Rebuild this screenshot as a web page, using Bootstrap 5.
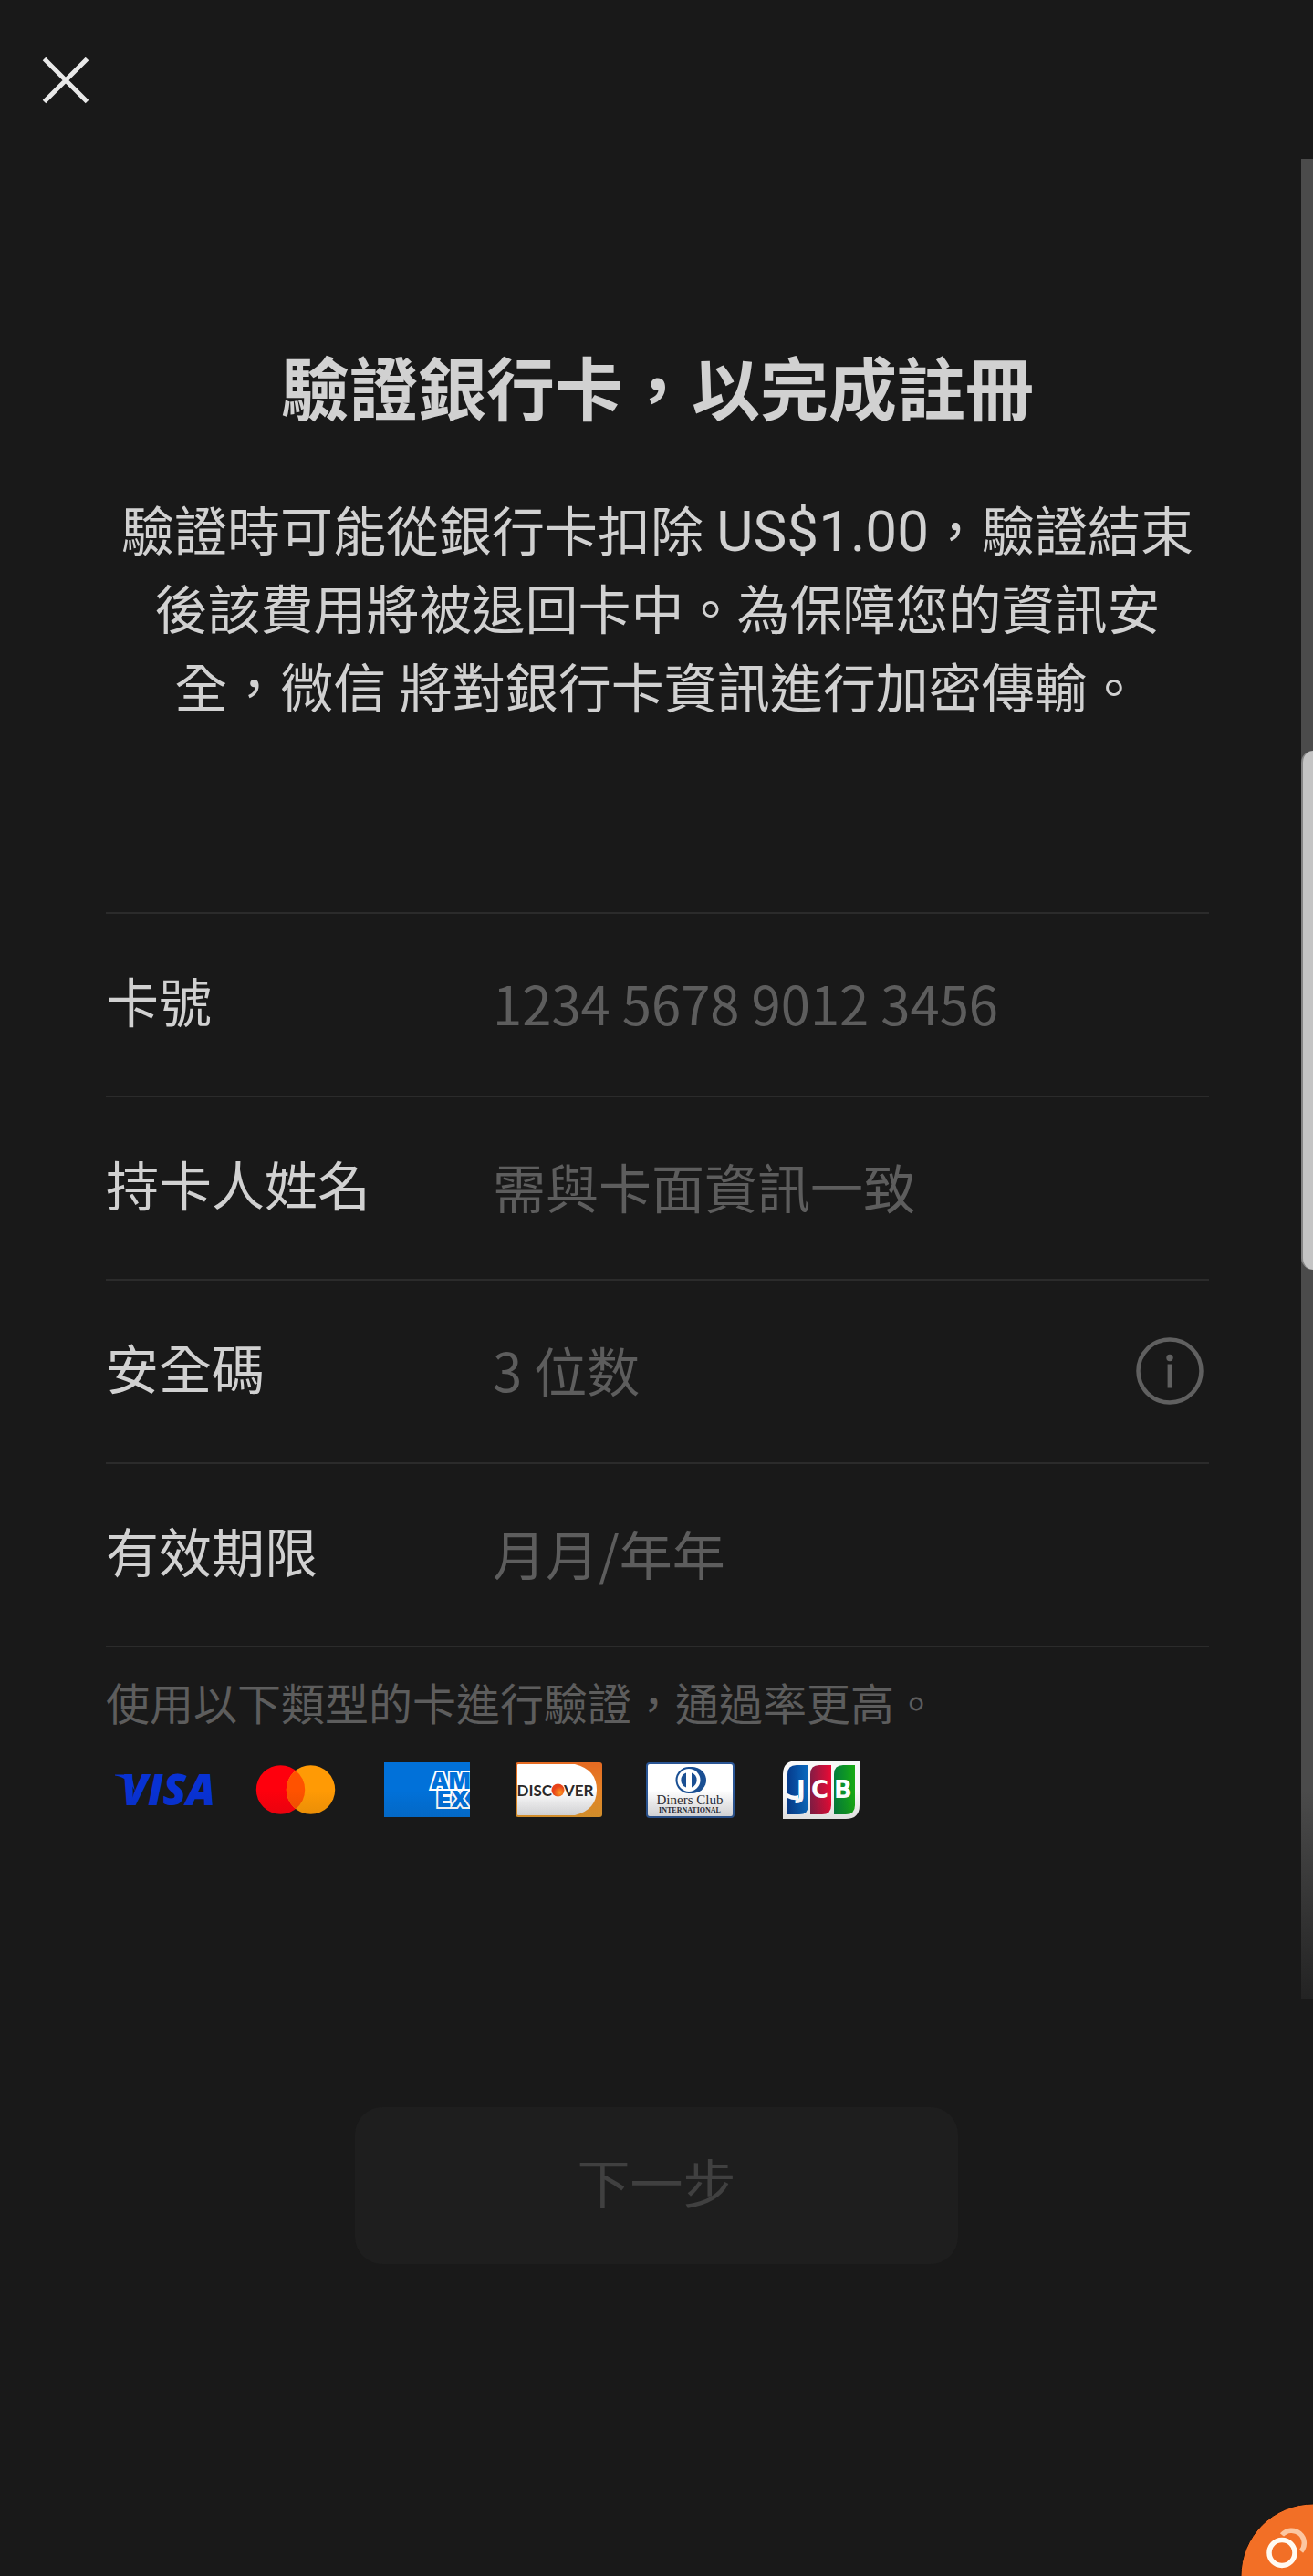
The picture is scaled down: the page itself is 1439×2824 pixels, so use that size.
<!DOCTYPE html>
<html lang="zh-Hant">
<head>
<meta charset="utf-8">
<meta name="viewport" content="width=device-width, initial-scale=1">
<title>驗證銀行卡</title>
<link href="https://cdn.jsdelivr.net/npm/bootstrap@5.3.0/dist/css/bootstrap.min.css" rel="stylesheet">
<style>
  :root { --page: #191919; --ink: #d1d1d1; --dim: #5d5d5d; --rule: #2b2b2b; }
  body { background: var(--page); color: var(--ink); font-family: Roboto, "Noto Sans CJK TC", sans-serif; font-size: 58px; line-height: 86px; }
  .top-bar { height: 174px; padding: 59px 43px; }
  .close-btn { line-height: 0; color: #e8e8e8; }
  .scroller { padding: 207px 114px 0 116px; }
  .page-title { font-size: 75px; line-height: 96px; font-weight: 700; margin-bottom: 64px; }
  .intro { margin-bottom: 201px; }
  .amount { font-size: 62px; line-height: 1; }
  .field-list { border-top: 2px solid var(--rule); }
  .field-row { height: 201px; border-bottom: 2px solid var(--rule); padding-bottom: 2px; }
  .field-row label { width: 424px; }
  .field-row input { background: transparent; border: 0; outline: 0; color: var(--ink); padding: 0 0 4px; min-width: 0; height: 90px; font-family: "Noto Sans CJK TC", sans-serif; }
  .field-row input::placeholder { color: var(--dim); opacity: 1; }
  .info-btn { line-height: 0; color: #606060; margin-right: 6px; }
  .hint { color: var(--dim); font-size: 48px; line-height: 72px; margin: 28px 0 22px; }
  .brands li { width: 128px; height: 68px; }
  .brands svg { display: block; overflow: visible; }
  .track { width: 13px; background: #4b4b4b; }
  .thumb { top: 649px; left: 0; right: 0; height: 569px; background: #c4c4c4; border-left: 2px solid #858585; border-radius: 13px 0 0 13px; }
  .fade-out { height: 228px; background: linear-gradient(rgba(25,25,25,0), rgba(25,25,25,.8)); pointer-events: none; }
  .bottom-bar { padding: 119px 0 342px; }
  .next-btn { width: 46%; height: 172px; border-radius: 30px; background: #1e1e1e; color: #404040; font-size: 58px; padding: 0; border: 0; }
  .next-btn:disabled { background: #1e1e1e; color: #404040; opacity: 1; }
  .float-btn { line-height: 0; }
</style>
<script src="https://cdn.jsdelivr.net/npm/bootstrap@5.3.0/dist/js/bootstrap.bundle.min.js"></script>
</head>
<body class="d-flex flex-column min-vh-100 position-relative">
<header class="top-bar">
  <button type="button" class="btn p-0 border-0 d-block close-btn" aria-label="關閉">
    <svg width="58" height="58" viewBox="0 0 58 58" fill="none" stroke="currentColor" stroke-width="5"><path d="M5.500 5.500l47 47M52.500 5.500l-47 47"/></svg>
  </button>
</header>

<main class="scroller flex-grow-1 position-relative">
  <h1 class="page-title text-center">驗證銀行卡，以完成註冊</h1>
  <p class="intro text-center">驗證時可能從銀行卡扣除 <span class="amount">US$1.00</span>，驗證結束後該費用將被退回卡中。為保障您的資訊安全，微信 將對銀行卡資訊進行加密傳輸。</p>

  <form id="card-form">
    <div class="field-list">
      <div class="field-row d-flex align-items-center">
        <label for="number" class="flex-shrink-0">卡號</label>
        <input id="number" class="flex-grow-1" type="text" inputmode="numeric" placeholder="1234 5678 9012 3456">
      </div>
      <div class="field-row d-flex align-items-center">
        <label for="holder" class="flex-shrink-0">持卡人姓名</label>
        <input id="holder" class="flex-grow-1" type="text" placeholder="需與卡面資訊一致">
      </div>
      <div class="field-row d-flex align-items-center">
        <label for="cvv" class="flex-shrink-0">安全碼</label>
        <input id="cvv" class="flex-grow-1" type="text" inputmode="numeric" placeholder="3 位数">
        <button type="button" class="btn p-0 border-0 info-btn" aria-label="安全碼說明">
          <svg width="74" height="74" viewBox="0 0 74 74"><circle cx="37" cy="37" r="34.5" fill="none" stroke="currentColor" stroke-width="4.5"/><circle cx="37" cy="22.500" r="3.700" fill="currentColor"/><path d="M37 29.500v26" stroke="currentColor" stroke-width="4.800"/></svg>
        </button>
      </div>
      <div class="field-row d-flex align-items-center">
        <label for="expiry" class="flex-shrink-0">有效期限</label>
        <input id="expiry" class="flex-grow-1" type="text" inputmode="numeric" placeholder="月月/年年">
      </div>
    </div>
    <p class="hint">使用以下類型的卡進行驗證，通過率更高。</p>
    <ul class="brands list-unstyled d-flex gap-3 m-0">
      <li class="d-flex align-items-center justify-content-center">
        <svg width="108" height="36" viewBox="0 0 108 36" fill="#0832d4"><path d="M0 1.500H14Q18 1.500 19 6L22 20Q16 5 0 2.500Z"/><text x="7" y="35" font-family="Open Sans" font-size="47" font-weight="800" font-style="italic">VISA</text></svg>
      </li>
      <li class="d-flex align-items-center justify-content-center">
        <svg width="88" height="54" viewBox="0 0 88 54"><circle cx="27.500" cy="27" r="26.700" fill="#fe000d"/><circle cx="60.500" cy="27" r="26.700" fill="#ff9a05"/><path d="M44 6a26.700 26.700 0 0 1 0 42a26.700 26.700 0 0 1 0-42z" fill="#ff5200"/></svg>
      </li>
      <li class="d-flex align-items-center justify-content-center">
        <svg width="94" height="60" viewBox="0 0 94 60">
          <clipPath id="amex-card"><path d="M0 0h94v60H0z"/></clipPath>
          <g clip-path="url(#amex-card)"><path d="M0 0h94v60H0z" fill="#0171d9"/>
          <g font-family="Inter" font-weight="900" font-size="25" fill="#0171d9" stroke="#fff" stroke-width="4" paint-order="stroke"><text x="51" y="29">AM</text><text x="58" y="49">EX</text></g></g>
        </svg>
      </li>
      <li class="d-flex align-items-center justify-content-center">
        <svg width="95" height="60" viewBox="0 0 95 60">
          <defs><linearGradient id="disc-bg" x2="0" y2="1"><stop stop-color="#e56a22"/><stop offset="1" stop-color="#e59a2c"/></linearGradient>
          <linearGradient id="disc-face" x2="0" y2="1"><stop offset=".5" stop-color="#fff"/><stop offset="1" stop-color="#e4e4e6"/></linearGradient>
          <radialGradient id="disc-o" cx=".65" cy=".7"><stop stop-color="#ff9a20"/><stop offset="1" stop-color="#e8431a"/></radialGradient></defs>
          <rect width="95" height="60" rx="3" fill="url(#disc-bg)"/>
          <path d="M3 2H65Q89 8 89 30T65 58H3Q2 58 2 57V3Q2 2 3 2Z" fill="url(#disc-face)"/>
          <g font-family="Lato" font-size="17" font-weight="700" fill="#2b2929"><text x="40" y="37" text-anchor="end">DISC</text><text x="53" y="37">VER</text></g>
          <circle cx="46.500" cy="30.500" r="7" fill="url(#disc-o)"/>
        </svg>
      </li>
      <li class="d-flex align-items-center justify-content-center">
        <svg width="97" height="61" viewBox="0 0 97 61">
          <rect x="1" y="1" width="95" height="59" rx="3" fill="url(#disc-face)" stroke="#2a5594" stroke-width="2"/>
          <path d="M46 5H50C60 5 66 12 66 19.500S60 34 50 34H46Z" fill="#1a4f93"/>
          <circle cx="47" cy="19.500" r="14.500" fill="#1a4f93"/><circle cx="47" cy="19.500" r="12.500" fill="#fff"/>
          <path d="M44 11.500a8.500 8.500 0 0 0 0 16zM50 11.500a8.500 8.500 0 0 1 0 16z" fill="#1a4f93"/>
          <g font-family="Liberation Serif" fill="#2d2c33" text-anchor="middle"><text x="48" y="46" font-size="15">Diners Club</text><text x="48" y="55" font-size="8" font-weight="700">INTERNATIONAL</text></g>
        </svg>
      </li>
      <li class="d-flex align-items-center justify-content-center">
        <svg width="84" height="64" viewBox="0 0 84 64">
          <defs><linearGradient id="jcb-b"><stop stop-color="#063b8c"/><stop offset="1" stop-color="#0a6bc0"/></linearGradient><linearGradient id="jcb-r"><stop stop-color="#851c45"/><stop offset="1" stop-color="#ea0a35"/></linearGradient><linearGradient id="jcb-g"><stop stop-color="#027d3b"/><stop offset="1" stop-color="#18ab13"/></linearGradient></defs>
          <path d="M16 0H84V49Q84 64 69 64H0V15Q0 0 16 0Z" fill="#f8f8f8"/>
          <path d="M15 5H28V49Q28 59 18 59H5V15Q5 5 15 5Z" fill="url(#jcb-b)"/>
          <path d="M40 5H53V49Q53 59 43 59H30V15Q30 5 40 5Z" fill="url(#jcb-r)"/>
          <path d="M66 5H79V49Q79 59 69 59H56V15Q56 5 66 5Z" fill="url(#jcb-g)"/>
          <g font-family="DejaVu Sans" font-size="26" font-weight="700" fill="#fff"><text x="15" y="41">J</text><text x="31" y="41">C</text><text x="56" y="41">B</text></g><path d="M5 36q6 4 12 2v5q-6 1-12-2z" fill="#fff"/>
        </svg>
      </li>
    </ul>
  </form>
  <div class="track position-absolute top-0 end-0 bottom-0"><div class="thumb position-absolute"></div></div>
  <div class="fade-out position-absolute start-0 end-0 bottom-0"></div>
</main>

<footer class="bottom-bar d-flex justify-content-center">
  <button type="submit" form="card-form" class="btn next-btn" disabled>下一步</button>
</footer>

<button type="button" class="btn p-0 border-0 float-btn position-absolute end-0 bottom-0" aria-label="懸浮視窗">
  <svg width="80" height="81" viewBox="0 0 80 81"><circle cx="80" cy="81" r="79" fill="#f26f26" stroke="#121212" stroke-width="1"/><path d="M46 36A13 13 0 1 1 67 54" fill="none" stroke="#fcc6a0" stroke-width="5.500"/><circle cx="46" cy="55.500" r="18" fill="#f26f26"/><circle cx="46" cy="55.500" r="14" fill="none" stroke="#fffaf2" stroke-width="5.500"/></svg>
</button>
</body>
</html>
